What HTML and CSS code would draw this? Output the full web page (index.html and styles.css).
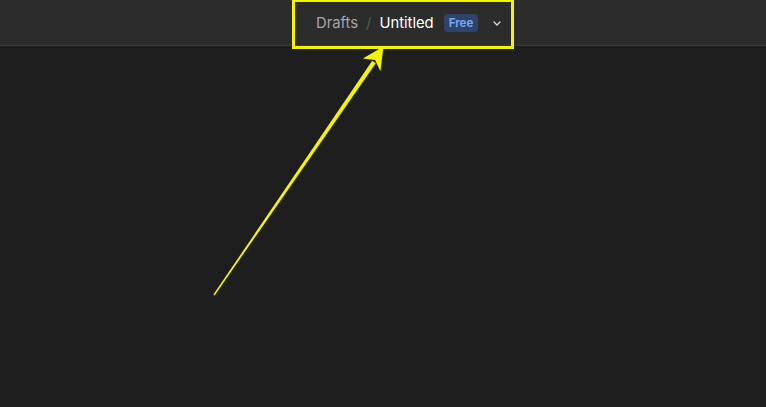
FILE: index.html
```html
<!DOCTYPE html>
<html lang="en">
<head>
<meta charset="utf-8">
<title>Untitled</title>
<link rel="stylesheet" href="styles.css">
</head>
<body>
  <header class="topbar">
    <nav class="crumbs">
      <span class="crumb">Drafts</span>
      <span class="sep">/</span>
      <span class="crumb current">Untitled</span>
      <span class="badge">Free</span>
      <svg class="chevron" width="8" height="5" viewBox="0 0 8 5" aria-hidden="true">
        <path d="M1 1 L4 4 L7 1" fill="none" stroke="#d8d8d8" stroke-width="1.3" stroke-linecap="round" stroke-linejoin="round"/>
      </svg>
    </nav>
  </header>
  <main class="canvas"></main>

  <div class="highlight"></div>
  <svg class="pointer" width="766" height="407" viewBox="0 0 766 407" aria-hidden="true">
    <polygon points="214.6,295.4 213.4,294.6 372.2,60.8 375.8,63.2" fill="#f4f400"/>
    <polygon points="383.5,46.5 362.8,58.6 375.1,60 380.4,71.3" fill="#f4f400"/>
  </svg>
</body>
</html>
```

FILE: styles.css
```css
html, body {
  margin: 0;
  height: 100%;
}

body {
  background: #1e1e1e;
  font-family: Inter, "Noto Sans", sans-serif;
  overflow: hidden;
}

.topbar {
  height: 45px;
  background: #2c2c2c;
  border-bottom: 1px solid #3b3b3b;
  display: flex;
  align-items: center;
  padding-left: 316px;
  box-sizing: content-box;
}

.crumbs {
  display: flex;
  align-items: center;
  font-size: 14.8px;
  line-height: 18px;
}

.crumb {
  color: #a6a6a6;
}

.crumb.current {
  color: #ffffff;
}

.sep {
  color: #5a5a5a;
  margin: 0 8px 0 8px;
}

.badge {
  margin-left: 10px;
  background: #2f4466;
  color: #6ea6ff;
  font-size: 11.5px;
  font-weight: 700;
  line-height: 18px;
  padding: 0 5px;
  border-radius: 4px;
}

.chevron {
  margin-left: 15px;
  margin-top: 1px;
}

.canvas {
  height: calc(100% - 46px);
}

/* callout frame around the title area */
.highlight {
  position: absolute;
  left: 292px;
  top: -1px;
  width: 216px;
  height: 44px;
  border: 3px solid #f4f400;
}

.pointer {
  position: absolute;
  left: 0;
  top: 0;
  pointer-events: none;
}
```
